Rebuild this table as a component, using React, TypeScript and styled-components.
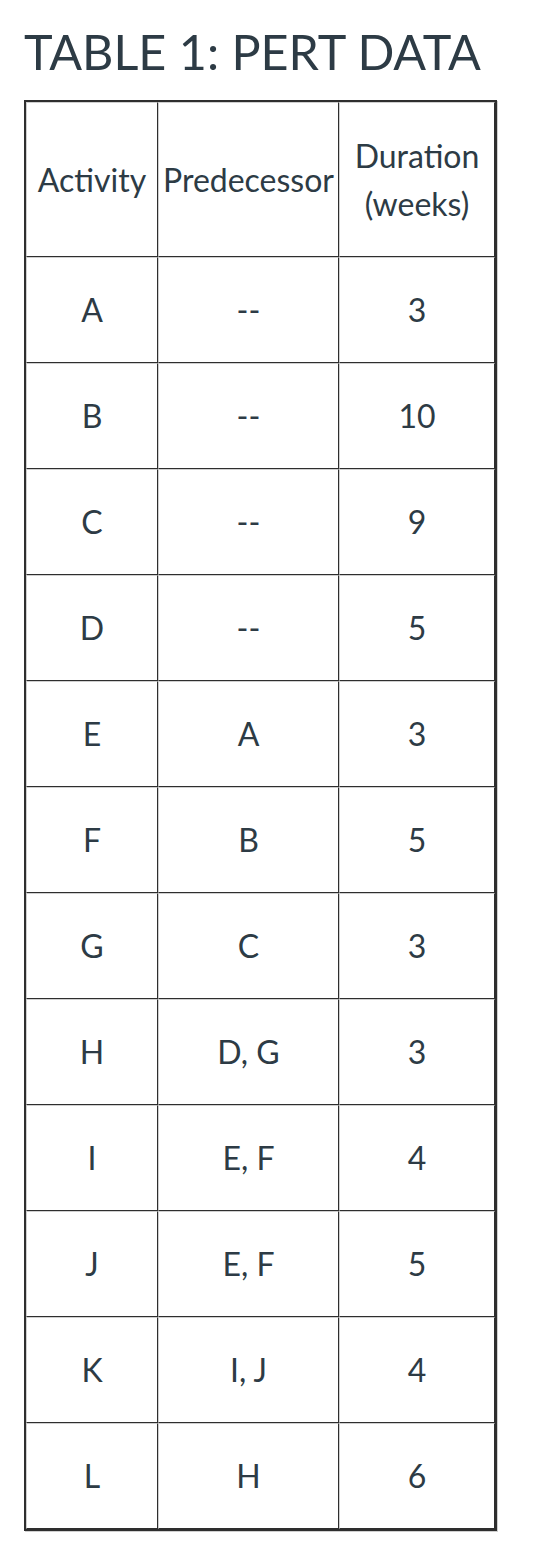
import React from "react";
import styled, { createGlobalStyle } from "styled-components";

const GlobalStyle = createGlobalStyle`
  body {
    margin: 0;
    background: #ffffff;
    font-family: Lato, "Open Sans", sans-serif;
    color: #2d3b45;
  }
`;

const Page = styled.div`
  padding: 22px 24px;
`;

const Title = styled.h1`
  margin: 0 0 20px;
  font-size: 48.5px;
  line-height: 1.2;
  font-weight: 400;
  color: #2d3b45;
`;

const Table = styled.table`
  width: 473px;
  table-layout: fixed;
  border-collapse: separate;
  border-spacing: 0;
  border: 2px solid #2e2e2e;
  box-shadow: 1px 1px 0 #cfcfcf;
`;

const Cell = styled.td`
  padding: 28px 2px;
  font-size: 32px;
  line-height: 48px;
  text-align: center;
  vertical-align: middle;
  color: #2d3b45;
  border-top: 1px solid #cfcfcf;
  border-left: 1px solid #cfcfcf;
  border-right: 1px solid #2e2e2e;
  border-bottom: 1px solid #2e2e2e;
`;

const HeadCell = styled(Cell).attrs({ as: "th" })`
  font-weight: 400;
  padding-top: 28.5px;
  padding-bottom: 28.5px;
`;

const rows: [string, string, string][] = [
  ["A", "--", "3"],
  ["B", "--", "10"],
  ["C", "--", "9"],
  ["D", "--", "5"],
  ["E", "A", "3"],
  ["F", "B", "5"],
  ["G", "C", "3"],
  ["H", "D, G", "3"],
  ["I", "E, F", "4"],
  ["J", "E, F", "5"],
  ["K", "I, J", "4"],
  ["L", "H", "6"],
];

export default function App() {
  return (
    <Page>
      <GlobalStyle />
      <Title>TABLE 1: PERT DATA</Title>
      <Table>
        <colgroup>
          <col style={{ width: 132 }} />
          <col style={{ width: 181 }} />
          <col style={{ width: 156 }} />
        </colgroup>
        <thead>
          <tr>
            <HeadCell>Activity</HeadCell>
            <HeadCell>Predecessor</HeadCell>
            <HeadCell>
              Duration
              <br />
              (weeks)
            </HeadCell>
          </tr>
        </thead>
        <tbody>
          {rows.map(([act, pre, dur]) => (
            <tr key={act}>
              <Cell>{act}</Cell>
              <Cell>{pre}</Cell>
              <Cell>{dur}</Cell>
            </tr>
          ))}
        </tbody>
      </Table>
    </Page>
  );
}
